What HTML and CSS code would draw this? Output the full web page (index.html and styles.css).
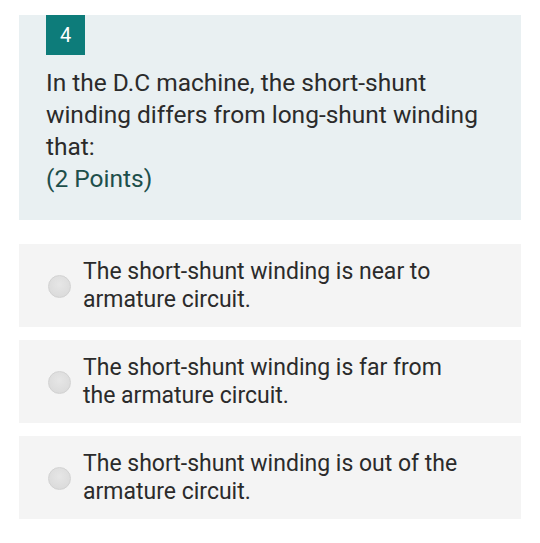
FILE: index.html
```html
<!DOCTYPE html>
<html>
<head>
<meta charset="utf-8">
<link rel="stylesheet" href="styles.css">
</head>
<body>
<div class="page">
  <div class="question">
    <div class="badge">4</div>
    <div class="qtext">In the D.C machine, the short-shunt winding differs from long-shunt winding that:</div>
    <div class="points">(2 Points)</div>
  </div>
  <div class="options">
    <div class="option"><span class="radio"></span><span class="label">The short-shunt winding is near to armature circuit.</span></div>
    <div class="option"><span class="radio"></span><span class="label">The short-shunt winding is far from the armature circuit.</span></div>
    <div class="option"><span class="radio"></span><span class="label">The short-shunt winding is out of the armature circuit.</span></div>
  </div>
</div>
</body>
</html>
```
FILE: styles.css
```css
html, body {
  margin: 0;
  padding: 0;
  background: #ffffff;
}
body {
  font-family: Roboto, "Liberation Sans", sans-serif;
  color: #2b2b2b;
}
.page {
  padding: 15px 19px 0 19px;
}
.question {
  background: #e9f0f2;
  padding: 0 27px 25px 27px;
}
.badge {
  width: 39px;
  height: 40px;
  background: #0d7c7a;
  color: #ffffff;
  font-size: 20px;
  display: flex;
  align-items: center;
  justify-content: center;
}
.qtext {
  margin-top: 12px;
  font-size: 24.5px;
  line-height: 32px;
  color: #2b2b2b;
}
.points {
  font-size: 24.5px;
  line-height: 32px;
  color: #1d4f4b;
}
.options {
  margin-top: 24px;
  display: flex;
  flex-direction: column;
  gap: 13px;
}
.option {
  background: #f4f4f4;
  display: flex;
  align-items: center;
  padding: 14px 20px 13px 29px;
  min-height: 56px;
}
.radio {
  flex: none;
  width: 21px;
  height: 21px;
  border-radius: 50%;
  border: 1px solid #d2d2d2;
  background: radial-gradient(circle at 50% 40%, #e6e6e6 0%, #dcdcdc 70%, #d0d0d0 100%);
  margin-right: 12px;
}
.label {
  font-size: 23px;
  line-height: 28px;
  color: #2b2b2b;
  max-width: 390px;
}
```
